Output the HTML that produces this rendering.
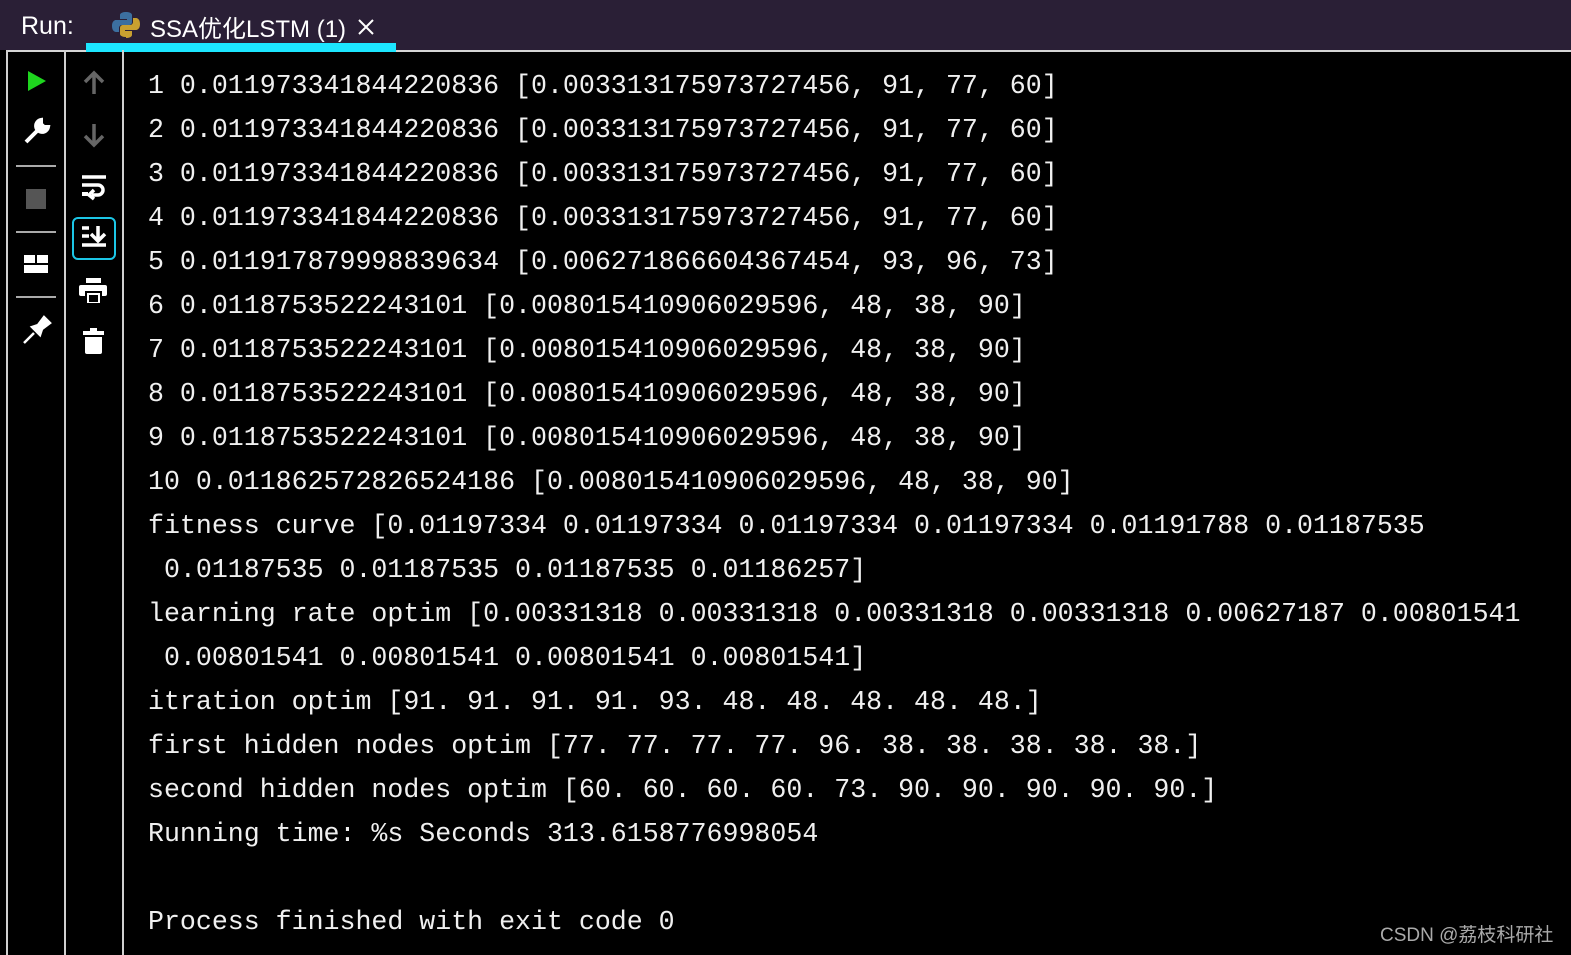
<!DOCTYPE html>
<html><head><meta charset="utf-8"><style>
body{margin:0;width:1571px;height:955px;background:#000;overflow:hidden;position:relative;font-family:"Liberation Sans","Noto Sans CJK SC",sans-serif}
.top{position:absolute;left:0;top:0;width:1571px;height:50px;background:#2a1f36}
.hl{position:absolute;left:7px;top:50px;width:1564px;height:2px;background:#d6d6d6}
.run{position:absolute;left:21px;top:12px;color:#fff;font-size:25px}
.tab{position:absolute;left:150px;top:9px;color:#fff;font-size:24px}
.ul{position:absolute;left:86px;top:43px;width:310px;height:9px;background:#1ce6ff}
.v{position:absolute;top:50px;width:2px;height:905px;background:#d0d0d0}
pre{position:absolute;left:148px;top:64px;margin:0;font-family:"Liberation Mono",monospace;font-size:26.6px;line-height:44px;color:#f0f0f0}
.wm{position:absolute;left:1380px;top:920px;color:#aaa;font-size:19px}
.sep{position:absolute;left:16px;width:40px;height:2px;background:#aaa}
svg{position:absolute}
</style></head><body>
<div class="top"></div>
<div class="run">Run:</div>
<svg style="left:111px;top:10px" width="30" height="30" viewBox="0 0 30 30"><path d="M15 2c-6 0-6 3-6 3v4h7v1H5s-4 0-4 6 4 6 4 6h3v-4s0-3 3-3h7s3 0 3-3V5s0-3-6-3z" fill="#3c6fa0"/><path d="M15 28c6 0 6-3 6-3v-4h-7v-1h11s4 0 4-6-4-6-4-6h-3v4s0 3-3 3h-7s-3 0-3 3v6s0 3 6 3z" fill="#c9a030"/></svg>
<div class="tab">SSA优化LSTM (1)</div>
<svg style="left:357px;top:18px" width="18" height="18"><path d="M2 2L16 16M16 2L2 16" stroke="#fff" stroke-width="2"/></svg>
<div class="hl"></div>
<div class="ul"></div>
<div class="v" style="left:6px"></div>
<div class="v" style="left:64px"></div>
<div class="v" style="left:122px"></div>
<svg style="left:26px;top:69px" width="22" height="24"><path d="M2 2L20 12L2 22Z" fill="#1ed51e"/></svg>
<svg style="left:22px;top:116px" width="30" height="30" viewBox="0 0 30 30"><path d="M4 26L16 14M19 4a6 6 0 1 0 7 7l-4 0-3-3z" stroke="#fff" stroke-width="4" fill="#fff"/></svg>
<div class="sep" style="top:165px"></div>
<div style="position:absolute;left:26px;top:189px;width:20px;height:20px;background:#555"></div>
<div class="sep" style="top:231px"></div>
<div style="position:absolute;left:24px;top:255px;width:11px;height:8px;background:#fff"></div>
<div style="position:absolute;left:37px;top:255px;width:11px;height:8px;background:#fff"></div>
<div style="position:absolute;left:24px;top:265px;width:24px;height:8px;background:#fff"></div>
<div class="sep" style="top:296px"></div>
<svg style="left:22px;top:315px" width="30" height="30" viewBox="0 0 30 30"><path d="M2 28L12 18M10 12L18 20L20 14L28 8L22 2L16 10Z" stroke="#fff" stroke-width="2.5" fill="#fff"/></svg>
<svg style="left:82px;top:70px" width="24" height="26"><path d="M12 24V3M3 12L12 3L21 12" stroke="#666" stroke-width="3.5" fill="none"/></svg>
<svg style="left:82px;top:122px" width="24" height="26"><path d="M12 2V23M3 14L12 23L21 14" stroke="#666" stroke-width="3.5" fill="none"/></svg>
<svg style="left:80px;top:173px" width="30" height="30"><path d="M2 4H26M2 12H18a5 5 0 0 1 0 10H12M14 17L9 22L14 26" stroke="#fff" stroke-width="3.5" fill="none"/><rect x="2" y="19" width="6" height="4" fill="#fff"/></svg>
<div style="position:absolute;left:72px;top:217px;width:44px;height:43px;border:2px solid #1cc6e6;border-radius:6px;box-sizing:border-box"></div>
<svg style="left:80px;top:224px" width="30" height="28"><path d="M2 4H9M2 12H9M2 21H26M18 2V16M11 10L18 17L25 10" stroke="#fff" stroke-width="3.5" fill="none"/></svg>
<svg style="left:79px;top:278px" width="30" height="28"><rect x="7" y="0" width="15" height="5" fill="#fff"/><rect x="0" y="7" width="28" height="11" rx="2" fill="#fff"/><rect x="7" y="14" width="15" height="12" fill="#fff" stroke="#000" stroke-width="2"/><rect x="10" y="17" width="9" height="7" fill="#000"/></svg>
<svg style="left:83px;top:328px" width="22" height="28"><rect x="0" y="3" width="21" height="4" fill="#fff"/><rect x="7" y="0" width="7" height="3" fill="#fff"/><path d="M2 9H19V24Q19 26 17 26H4Q2 26 2 24Z" fill="#fff"/></svg>
<pre>1 0.011973341844220836 [0.003313175973727456, 91, 77, 60]
2 0.011973341844220836 [0.003313175973727456, 91, 77, 60]
3 0.011973341844220836 [0.003313175973727456, 91, 77, 60]
4 0.011973341844220836 [0.003313175973727456, 91, 77, 60]
5 0.011917879998839634 [0.006271866604367454, 93, 96, 73]
6 0.0118753522243101 [0.008015410906029596, 48, 38, 90]
7 0.0118753522243101 [0.008015410906029596, 48, 38, 90]
8 0.0118753522243101 [0.008015410906029596, 48, 38, 90]
9 0.0118753522243101 [0.008015410906029596, 48, 38, 90]
10 0.011862572826524186 [0.008015410906029596, 48, 38, 90]
fitness curve [0.01197334 0.01197334 0.01197334 0.01197334 0.01191788 0.01187535
 0.01187535 0.01187535 0.01187535 0.01186257]
learning rate optim [0.00331318 0.00331318 0.00331318 0.00331318 0.00627187 0.00801541
 0.00801541 0.00801541 0.00801541 0.00801541]
itration optim [91. 91. 91. 91. 93. 48. 48. 48. 48. 48.]
first hidden nodes optim [77. 77. 77. 77. 96. 38. 38. 38. 38. 38.]
second hidden nodes optim [60. 60. 60. 60. 73. 90. 90. 90. 90. 90.]
Running time: %s Seconds 313.6158776998054

Process finished with exit code 0</pre>
<div class="wm">CSDN @荔枝科研社</div>
</body></html>
